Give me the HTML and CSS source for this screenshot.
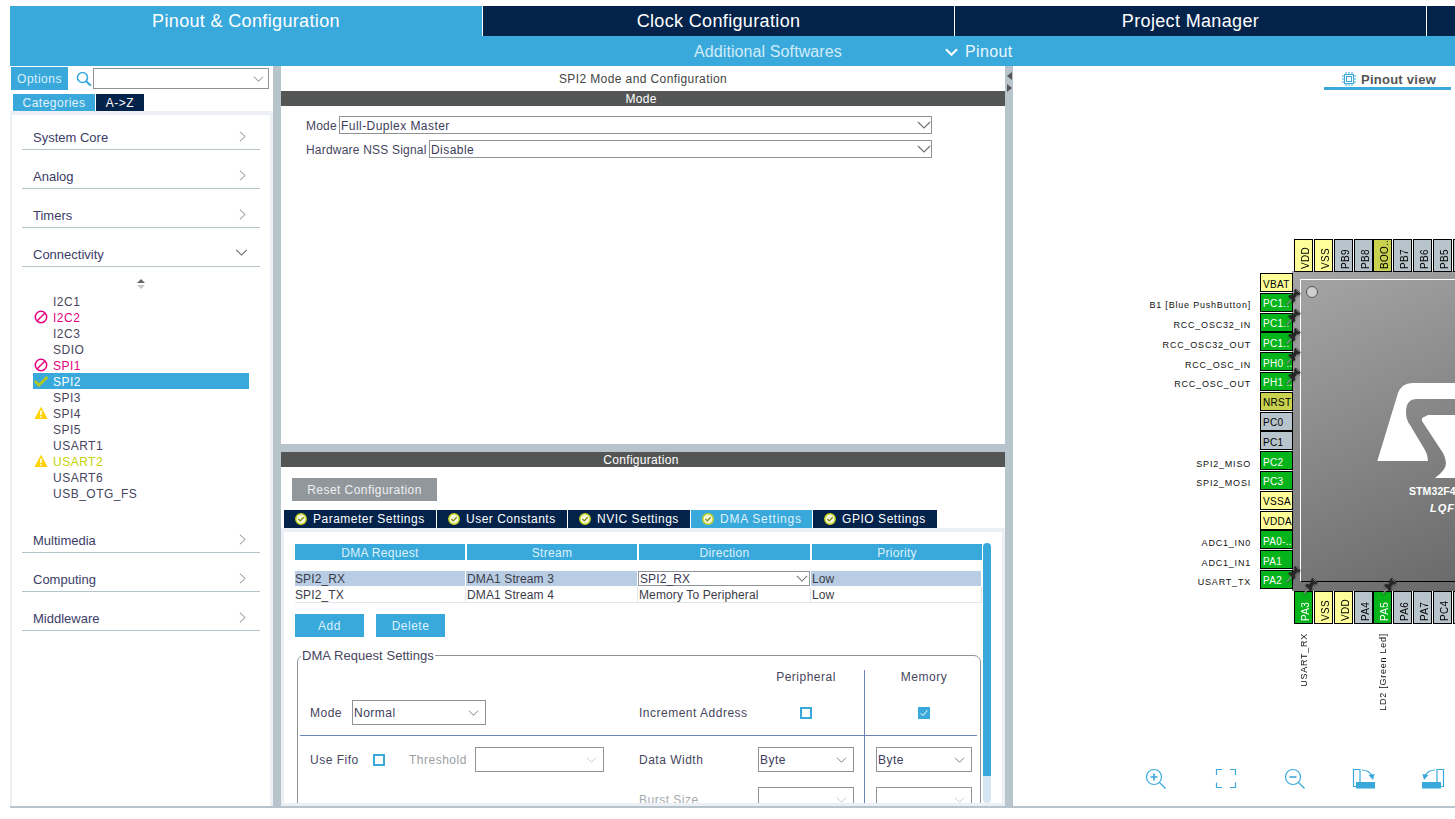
FILE: index.html
```html
<!DOCTYPE html>
<html lang="en">
<head>
<meta charset="utf-8">
<title>SPI2 Mode and Configuration</title>
<link rel="stylesheet" href="styles.css">
</head>
<body>
<svg class="defs" width="0" height="0" aria-hidden="true">
  <symbol id="chev" viewBox="0 0 14 8"><path d="M1 1 L7 7 L13 1" fill="none" stroke="currentColor" stroke-width="1.2"/></symbol>
  <symbol id="chevb" viewBox="0 0 14 8"><path d="M1 1 L7 7 L13 1" fill="none" stroke="currentColor" stroke-width="2.2"/></symbol>
  <symbol id="right" viewBox="0 0 8 12"><path d="M1 .5 L7 6 L1 11.5" fill="none" stroke="currentColor" stroke-width="1"/></symbol>
  <symbol id="tack" viewBox="0 0 16 18">
    <path d="M1 17.5 L6.5 11.5" stroke="#8c8c8c" stroke-width="1.4" fill="none"/>
    <path d="M2.2 8.4 L4.4 7.4 L6.6 8 L9.2 4.6 L8.6 2.6 L10.4 .8 L15.6 5.6 L13.8 7.6 L11.8 7 L9.2 10.8 L10 13 L8.4 15 Z" fill="#262626"/>
    <path d="M10.6 2 L14 5.2" stroke="#8a8a8a" stroke-width=".9" fill="none"/>
  </symbol>
  <symbol id="tabok" viewBox="0 0 12 12">
    <circle cx="6" cy="6" r="5.2" fill="#f4f6dc" stroke="#c5d21c" stroke-width="1.5"/>
    <path d="M3.4 6 L5.3 7.9 L8.7 4.2" fill="none" stroke="#7f8c10" stroke-width="1.3"/>
  </symbol>
  <symbol id="no" viewBox="0 0 14 14">
    <circle cx="7" cy="7" r="5.7" fill="none" stroke="#e4007f" stroke-width="1.5"/>
    <path d="M3.2 10.8 L10.8 3.2" stroke="#e4007f" stroke-width="1.5"/>
  </symbol>
  <symbol id="warn" viewBox="0 0 14 14">
    <path d="M7 .8 L13.6 13 H.4 Z" fill="#ffd400"/>
    <path d="M7 4.5 V9 M7 10.2 V11.8" stroke="#fff" stroke-width="1.6"/>
  </symbol>
</svg>

<div class="app">
  <nav class="tabs">
    <div class="tab tab-on">Pinout &amp; Configuration</div>
    <div class="tab">Clock Configuration</div>
    <div class="tab">Project Manager</div>
    <div class="tab tab-end"></div>
  </nav>
  <div class="subnav">
    <span class="sub-soft">Additional Softwares</span>
    <span class="sub-pin"><svg class="sub-chev"><use href="#chevb"/></svg>Pinout</span>
  </div>

  <main class="main">
    <aside class="side">
      <div class="opt-row">
        <button class="opt">Options</button>
        <svg class="search" viewBox="0 0 16 16"><circle cx="6.5" cy="6.5" r="5" fill="none" stroke="#39a9dc" stroke-width="1.6"/><path d="M10.2 10.2 L14.8 14.8" stroke="#39a9dc" stroke-width="2"/></svg>
        <div class="sel sel-search"><span></span><svg class="chev"><use href="#chev"/></svg></div>
      </div>
      <div class="cat-row">
        <div class="cat cat-on">Categories</div>
        <div class="cat cat-az">A-&gt;Z</div>
      </div>
      <div class="side-back">
        <div class="side-in">
          <div class="acc"><span>System Core</span><svg class="acc-r"><use href="#right"/></svg></div>
          <div class="acc"><span>Analog</span><svg class="acc-r"><use href="#right"/></svg></div>
          <div class="acc"><span>Timers</span><svg class="acc-r"><use href="#right"/></svg></div>
          <div class="acc"><span>Connectivity</span><svg class="acc-d"><use href="#chev"/></svg></div>
          <div class="ip-list">
            <div class="sort"><i class="sort-up"></i><i class="sort-dn"></i></div>
            <div class="ip"><span class="ip-ic"></span><span class="ip-t">I2C1</span></div>
            <div class="ip ip-no"><span class="ip-ic"><svg class="ic14"><use href="#no"/></svg></span><span class="ip-t">I2C2</span></div>
            <div class="ip"><span class="ip-ic"></span><span class="ip-t">I2C3</span></div>
            <div class="ip"><span class="ip-ic"></span><span class="ip-t">SDIO</span></div>
            <div class="ip ip-no"><span class="ip-ic"><svg class="ic14"><use href="#no"/></svg></span><span class="ip-t">SPI1</span></div>
            <div class="ip ip-sel"><span class="ip-ic"><svg class="ic14" viewBox="0 0 14 14"><path d="M.8 7 L5 11.2 L13.4 3" fill="none" stroke="#b5c91b" stroke-width="2.6"/></svg></span><span class="ip-t">SPI2</span></div>
            <div class="ip"><span class="ip-ic"></span><span class="ip-t">SPI3</span></div>
            <div class="ip"><span class="ip-ic"><svg class="ic14"><use href="#warn"/></svg></span><span class="ip-t">SPI4</span></div>
            <div class="ip"><span class="ip-ic"></span><span class="ip-t">SPI5</span></div>
            <div class="ip"><span class="ip-ic"></span><span class="ip-t">USART1</span></div>
            <div class="ip ip-warn"><span class="ip-ic"><svg class="ic14"><use href="#warn"/></svg></span><span class="ip-t">USART2</span></div>
            <div class="ip"><span class="ip-ic"></span><span class="ip-t">USART6</span></div>
            <div class="ip"><span class="ip-ic"></span><span class="ip-t">USB_OTG_FS</span></div>
          </div>
          <div class="acc"><span>Multimedia</span><svg class="acc-r"><use href="#right"/></svg></div>
          <div class="acc"><span>Computing</span><svg class="acc-r"><use href="#right"/></svg></div>
          <div class="acc"><span>Middleware</span><svg class="acc-r"><use href="#right"/></svg></div>
        </div>
      </div>
    </aside>

    <div class="split"></div>

    <section class="center">
      <div class="mode-panel">
        <div class="panel-title">SPI2 Mode and Configuration</div>
        <div class="bar">Mode</div>
        <div class="mode-form">
          <div class="mode-row">
            <label class="mode-l1">Mode</label>
            <div class="sel sel-mode"><span>Full-Duplex Master</span><svg class="chev"><use href="#chev"/></svg></div>
          </div>
          <div class="mode-row">
            <label class="mode-l2">Hardware NSS Signal</label>
            <div class="sel sel-mode"><span>Disable</span><svg class="chev"><use href="#chev"/></svg></div>
          </div>
        </div>
      </div>
      <div class="hsplit"></div>
      <div class="config">
        <div class="bar">Configuration</div>
        <button class="reset">Reset Configuration</button>
        <div class="ctabs">
          <div class="ctab ct1"><svg class="ic12"><use href="#tabok"/></svg>Parameter Settings</div>
          <div class="ctab ct2"><svg class="ic12"><use href="#tabok"/></svg>User Constants</div>
          <div class="ctab ct3"><svg class="ic12"><use href="#tabok"/></svg>NVIC Settings</div>
          <div class="ctab ct4 ctab-on"><svg class="ic12"><use href="#tabok"/></svg>DMA Settings</div>
          <div class="ctab ct5"><svg class="ic12"><use href="#tabok"/></svg>GPIO Settings</div>
        </div>
        <div class="cback">
          <div class="cin">
            <div class="sbar"></div>
            <div class="dma-head">
              <div>DMA Request</div><div>Stream</div><div>Direction</div><div>Priority</div>
            </div>
            <div class="dma-row dma-sel">
              <div>SPI2_RX</div><div>DMA1 Stream 3</div>
              <div class="dma-dirc"><div class="sel sel-cell"><span>SPI2_RX</span><svg class="chev"><use href="#chev"/></svg></div></div>
              <div>Low</div>
            </div>
            <div class="dma-row">
              <div>SPI2_TX</div><div>DMA1 Stream 4</div><div>Memory To Peripheral</div><div>Low</div>
            </div>
            <div class="btns">
              <button class="btn">Add</button>
              <button class="btn">Delete</button>
            </div>
            <fieldset class="req">
              <legend>DMA Request Settings</legend>
              <div class="req-grid">
                <div class="cell c-left"></div>
                <div class="cell c-mid c-head"><span class="ctl-w">Peripheral</span></div>
                <div class="cell c-right c-head"><span class="ctl-w">Memory</span></div>

                <div class="cell c-left rule">
                  <label class="lb-mode">Mode</label>
                  <div class="sel sel-md"><span>Normal</span><svg class="chev"><use href="#chev"/></svg></div>
                </div>
                <div class="cell c-mid rule">
                  <label class="lb-right">Increment Address</label>
                  <div class="ctl-w box-c"><i class="cb"></i></div>
                </div>
                <div class="cell c-right rule">
                  <div class="ctl-w box-c"><i class="cb cb-on"><svg viewBox="0 0 12 12"><path d="M2.6 6.2 L5 8.6 L9.4 3.4" fill="none" stroke="#fff" stroke-width="1"/></svg></i></div>
                </div>

                <div class="cell c-left r2">
                  <label class="lb-fifo">Use Fifo</label>
                  <i class="cb"></i>
                  <label class="lb-thr">Threshold</label>
                  <div class="sel sel-thr off"><span></span><svg class="chev"><use href="#chev"/></svg></div>
                </div>
                <div class="cell c-mid r2">
                  <label class="lb-right">Data Width</label>
                  <div class="sel ctl-w sel-sm"><span>Byte</span><svg class="chev"><use href="#chev"/></svg></div>
                </div>
                <div class="cell c-right r2">
                  <div class="sel ctl-w sel-sm"><span>Byte</span><svg class="chev"><use href="#chev"/></svg></div>
                </div>

                <div class="cell c-left r3"></div>
                <div class="cell c-mid r3">
                  <label class="lb-right lb-off">Burst Size</label>
                  <div class="sel ctl-w sel-sm off"><span></span><svg class="chev"><use href="#chev"/></svg></div>
                </div>
                <div class="cell c-right r3">
                  <div class="sel ctl-w sel-sm off"><span></span><svg class="chev"><use href="#chev"/></svg></div>
                </div>
              </div>
            </fieldset>
          </div>
        </div>
      </div>
    </section>

    <div class="split split-v"><i class="arr-l"></i><i class="arr-r"></i></div>

    <section class="pinout">
      <header class="pv-head">
        <div class="pv-tab">
          <svg class="pv-ic" viewBox="0 0 14 14" fill="none" stroke="#39a9dc"><rect x="2.5" y="2.5" width="9" height="9"/><rect x="4.5" y="4.5" width="5" height="5"/><path d="M4 0V2M7 0V2M10 0V2M4 12V14M7 12V14M10 12V14M0 4H2M0 7H2M0 10H2M12 4H14M12 7H14M12 10H14"/></svg>
          Pinout view
        </div>
      </header>
      <div class="canvas">
        <div class="chip">
          <div class="chip-line"></div>
          <i class="dot"></i>
          <svg class="logo" viewBox="1352 371 110 120">
            <path fill="#fff" d="M1377.3 461 L1398 393 Q1402 383 1412 383 H1462 V399 H1417 Q1406 399 1406 412 Q1406 420 1410 425 L1425 450 Q1428 455 1428 461 Z"/>
            <path fill="#fff" d="M1422 418 L1428 415 H1462 V478 H1435 Q1446 470 1446 463 Q1445 455 1441 450 L1422 421 Z"/>
          </svg>
          <div class="chip-name">STM32F446RETx</div>
          <div class="chip-pkg">LQFP64</div>
        </div>

        <div class="pins-left">
          <div class="pr"><b class="pin y">VBAT</b></div>
          <div class="pr"><span>B1 [Blue PushButton]</span><b class="pin g">PC1..<svg class="tack"><use href="#tack"/></svg></b></div>
          <div class="pr"><span>RCC_OSC32_IN</span><b class="pin g">PC1..<svg class="tack"><use href="#tack"/></svg></b></div>
          <div class="pr"><span>RCC_OSC32_OUT</span><b class="pin g">PC1..<svg class="tack"><use href="#tack"/></svg></b></div>
          <div class="pr"><span>RCC_OSC_IN</span><b class="pin g">PH0 ..<svg class="tack"><use href="#tack"/></svg></b></div>
          <div class="pr"><span>RCC_OSC_OUT</span><b class="pin g">PH1 ..<svg class="tack"><use href="#tack"/></svg></b></div>
          <div class="pr"><b class="pin o">NRST</b></div>
          <div class="pr"><b class="pin s">PC0</b></div>
          <div class="pr"><b class="pin s">PC1</b></div>
          <div class="pr"><span>SPI2_MISO</span><b class="pin g">PC2</b></div>
          <div class="pr"><span>SPI2_MOSI</span><b class="pin g">PC3</b></div>
          <div class="pr"><b class="pin y">VSSA</b></div>
          <div class="pr"><b class="pin y">VDDA</b></div>
          <div class="pr"><span>ADC1_IN0</span><b class="pin g">PA0-..</b></div>
          <div class="pr"><span>ADC1_IN1</span><b class="pin g">PA1</b></div>
          <div class="pr"><span>USART_TX</span><b class="pin g">PA2<svg class="tack"><use href="#tack"/></svg></b></div>
        </div>

        <div class="pins-h pins-top">
          <div class="pc"><b class="pin v y">VDD</b></div>
          <div class="pc"><b class="pin v y">VSS</b></div>
          <div class="pc"><b class="pin v s">PB9</b></div>
          <div class="pc"><b class="pin v s">PB8</b></div>
          <div class="pc"><b class="pin v o">BOO..</b></div>
          <div class="pc"><b class="pin v s">PB7</b></div>
          <div class="pc"><b class="pin v s">PB6</b></div>
          <div class="pc"><b class="pin v s">PB5</b></div>
          <div class="pc"><b class="pin v s">PB4</b></div>
        </div>

        <div class="pins-h pins-bot">
          <div class="pc"><b class="pin v g">PA3</b><svg class="tack tack-b"><use href="#tack"/></svg><span class="vl">USART_RX</span></div>
          <div class="pc"><b class="pin v y">VSS</b></div>
          <div class="pc"><b class="pin v y">VDD</b></div>
          <div class="pc"><b class="pin v s">PA4</b></div>
          <div class="pc"><b class="pin v g">PA5</b><svg class="tack tack-b"><use href="#tack"/></svg><span class="vl">LD2 [Green Led]</span></div>
          <div class="pc"><b class="pin v s">PA6</b></div>
          <div class="pc"><b class="pin v s">PA7</b></div>
          <div class="pc"><b class="pin v s">PC4</b></div>
          <div class="pc"><b class="pin v s">PC5</b></div>
        </div>
      </div>
      <footer class="tools">
        <svg class="tool" viewBox="0 0 24 24"><circle cx="9" cy="10" r="7.5"/><path d="M9 6.5V13.5M5.5 10H12.5" stroke-width="1.6"/><path d="M14.5 15.5 L20.5 21.5"/></svg>
        <svg class="tool" viewBox="0 0 24 24"><path d="M2.5 8V2.5H8M16 2.5H21.5V8M21.5 15.5V20.5H16M8 20.5H2.5V15.5"/></svg>
        <svg class="tool" viewBox="0 0 24 24"><circle cx="10" cy="10" r="7.5"/><path d="M6.5 10H13.5" stroke-width="1.6"/><path d="M15.5 15.5 L21.5 21.5"/></svg>
        <svg class="tool" viewBox="0 0 24 24"><path d="M8 15V2.5H1.5V19.5H4"/><path d="M10 3 Q17 3 20 9"/><path class="tf" d="M16.5 8 L22.5 7 L21 13 Z"/><rect class="tf" x="4" y="15" width="19" height="6.5"/></svg>
        <svg class="tool" viewBox="0 0 24 24"><path d="M16 15V2.5H22.5V19.5H20"/><path d="M14 3 Q7 3 4 9"/><path class="tf" d="M7.5 8 L1.5 7 L3 13 Z"/><rect class="tf" x="1" y="15" width="19" height="6.5"/></svg>
      </footer>
    </section>
  </main>
</div>
</body>
</html>
```

FILE: styles.css
```css
* { box-sizing: border-box; }
html, body { margin: 0; height: 100%; background: #fff; overflow: hidden; }
body {
  font-family: "Liberation Sans", Arial, sans-serif;
  font-size: 12px;
  letter-spacing: .5px;
  color: #46465e;
}
.defs { position: absolute; }
button { font: inherit; letter-spacing: inherit; border: 0; padding: 0; }
label { display: block; }
i { display: block; }

.app { margin: 6px 0 0 10px; width: 1445px; height: 802px; display: flex; flex-direction: column; border-bottom: 2px solid #b8c4cc; }

/* top navigation */
.tabs { display: flex; height: 30px; gap: 1px; background: #fff; }
.tab { width: 471px; background: #03234b; color: #fff; font-size: 18px; letter-spacing: .35px; display: flex; align-items: center; justify-content: center; padding-top: 1px; }
.tab-on { width: 472px; background: #39a9dc; }
.tab-end { width: 28px; }
.subnav { height: 30px; background: #39a9dc; display: flex; align-items: center; padding: 1px 0 0 684px; font-size: 16px; letter-spacing: .1px; }
.sub-soft { color: #d2ecf8; width: 251px; }
.sub-pin { color: #eaf6fc; display: flex; align-items: center; gap: 7px; letter-spacing: .35px; }
.sub-chev { width: 13px; height: 8px; color: #fff; }

/* layout */
.main { flex: 1; min-height: 0; display: grid; grid-template-columns: 263px 8px 724px 8px 442px; }
.split { background: #b8c4cc; }
.split-v { padding-top: 4px; }
.arr-l, .arr-r { width: 0; height: 0; border-style: solid; border-color: transparent; margin: 2px 0 4px 2px; }
.arr-l { border-width: 4px 5px 4px 0; border-right-color: #555; }
.arr-r { border-width: 4px 0 4px 5px; border-left-color: #555; }

/* sidebar */
.side { display: flex; flex-direction: column; min-height: 0; }
.opt-row { height: 28px; display: flex; padding: 1px 0 0 1px; }
.opt { width: 57px; height: 23px; background: #39a9dc; color: #d9f0fb; }
.search { width: 16px; height: 16px; margin: 4px 0 0 8px; }
.sel { display: flex; align-items: center; justify-content: space-between; background: #fff; border: 1px solid #8f9398; color: #3c3c5a; padding: 0 6px 0 1px; }
.sel-search { width: 176px; height: 21px; margin: 1px 0 0 1px; padding-right: 4px; }
.chev { width: 11px; height: 6px; color: #6e7276; flex: none; }
.off .chev { color: #c0c4c8; }
.cat-row { display: flex; height: 17px; padding-left: 3px; gap: 1px; }
.cat { display: flex; align-items: center; justify-content: center; color: #e2f3fb; }
.cat-on { width: 82px; background: #39a9dc; }
.cat-az { width: 48px; background: #03234b; color: #fff; }
.side-back { flex: 1; background: #eceff3; padding: 4px 3px 0 2px; min-height: 0; }
.side-in { background: #fff; height: 100%; padding: 0 10px; }
.acc { height: 39px; border-bottom: 1px solid #b8c4cc; display: flex; align-items: flex-end; justify-content: space-between; padding: 0 14px 4px 11px; font-size: 13px; letter-spacing: 0; color: #3c3c68; }
.acc:first-child { height: 35px; }
.acc-r { width: 7px; height: 11px; color: #777; margin-bottom: 3px; }
.acc-d { width: 13px; height: 7px; color: #666; margin: 0 -2px 6px 0; }
.ip-list { height: 247px; padding: 12px 0 0 11px; }
.sort { height: 14px; width: 216px; display: flex; flex-direction: column; align-items: center; gap: 2px; }
.sort-up, .sort-dn { width: 0; height: 0; border-style: solid; border-color: transparent; }
.sort-up { border-width: 0 4px 4px; border-bottom-color: #666; }
.sort-dn { border-width: 4px 4px 0; border-top-color: #c4c8cc; }
.ip { width: 216px; height: 16px; display: flex; align-items: center; }
.ip-t { padding-top: 1px; }
.ip-ic { width: 20px; height: 16px; flex: none; display: flex; align-items: center; padding-left: 1px; }
.ic14 { width: 14px; height: 14px; }
.ip-no { color: #e4007f; }
.ip-warn { color: #c3d200; }
.ip-sel { background: #39a9dc; color: #fff; }

/* centre */
.center { display: flex; flex-direction: column; min-height: 0; }
.mode-panel { height: 378px; }
.panel-title { height: 25px; display: flex; align-items: center; justify-content: center; color: #444; letter-spacing: .4px; }
.bar { height: 15px; background: #545656; color: #fff; display: flex; align-items: center; justify-content: center; letter-spacing: .3px; padding-right: 4px; }
.mode-form { padding: 10px 0 0 25px; display: flex; flex-direction: column; gap: 6px; letter-spacing: .2px; }
.mode-row { display: flex; align-items: center; }
.mode-row label, .mode-row span { padding-top: 1px; }
.mode-l1 { width: 33px; }
.mode-l2 { width: 123px; }
.sel-mode { flex: 1; height: 18px; margin-right: 73px; padding-right: 0; letter-spacing: .45px; }
.sel-mode .chev { width: 14px; height: 8px; }
.hsplit { height: 8px; background: #b8c4cc; }
.config { flex: 1; min-height: 0; display: flex; flex-direction: column; }
.reset { align-self: flex-start; width: 145px; height: 23px; margin: 11px 0 9px 11px; background: #92979c; color: #eef0f2; flex: none; letter-spacing: .45px; }
.ctabs { display: flex; gap: 1px; height: 18px; padding-left: 3px; flex: none; }
.ctab { background: #03234b; color: #fff; display: flex; align-items: center; padding-left: 11px; gap: 6px; }
.ct1 { width: 152px; } .ct2 { width: 130px; } .ct3 { width: 122px; } .ct4 { width: 121px; } .ct5 { width: 124px; letter-spacing: .55px; }
.ctab-on { background: #39a9dc; color: #def1fa; letter-spacing: .75px; }
.ic12 { width: 12px; height: 12px; flex: none; }
.cback { flex: 1; min-height: 0; background: #eceff3; padding: 4px 3px 3px; }
.cin { position: relative; background: #fff; height: 100%; overflow: hidden; padding: 12px 0 0 11px; }
.sbar { position: absolute; left: 699px; top: 11px; width: 8px; height: 260px; border-radius: 4px; background: linear-gradient(#39a9dc 233px, #d7e6f3 233px); }
.dma-head { display: grid; grid-template-columns: 170px 170px 171px 170px; gap: 2px; height: 16px; width: 687px; }
.dma-head div { background: #39a9dc; color: #def1fa; display: flex; align-items: center; justify-content: center; letter-spacing: .3px; padding-top: 1px; }
.dma-row { display: grid; grid-template-columns: 171px 172px 173px 171px; height: 16px; width: 687px; border-bottom: 1px solid #e2e6ea; color: #3c3c48; }
.dma-row > div { padding: 0 1px; border-right: 1px solid #e2e6ea; display: flex; align-items: center; overflow: hidden; letter-spacing: .12px; }
.dma-row > div:first-child { padding-left: 0; }
.dma-head + .dma-row { margin-top: 11px; }
.dma-sel { background: #b8cde3; border-bottom: 1px solid #fff; }
.dma-sel > div { border-right-color: #fff; }
.dma-row > .dma-dirc { padding: 0; }
.sel-cell { width: 100%; height: 15px; padding-right: 0; }
.sel-cell .chev { width: 12px; height: 7px; margin-right: 1px; }
.btns { display: flex; gap: 12px; margin-top: 11px; }
.btn { width: 69px; height: 23px; background: #39a9dc; color: #def1fa; }

/* fieldset */
.req { margin: 11px 0 0 2px; width: 684px; height: 250px; padding: 7px 0 0 0; border: 1px solid #8f9398; border-radius: 7px; min-width: 0; }
.req legend { margin-left: 3px; padding: 0 1px; font-size: 13px; letter-spacing: .05px; line-height: 15px; }
.req-grid { display: grid; grid-template-columns: 341px 226px 115px; grid-template-rows: 20px 46px 47px 40px; }
.cell { display: flex; align-items: center; }
.c-mid { border-right: 1px solid #6a84ba; }
.c-head { align-items: flex-start; }
.c-mid.c-head { padding-left: 119px; }
.c-right { padding-left: 11px; }
.ctl-w { width: 96px; text-align: center; }
.rule { border-bottom: 1px solid #6a84ba; }
.c-left.rule { margin-left: 2px; padding-left: 10px; }
.c-right.rule { margin-right: 3px; }
.c-left.r2 { padding-left: 12px; }
.lb-mode { width: 42px; }
.lb-fifo { width: 63px; }
.lb-thr { width: 66px; margin-left: 24px; color: #9a9ea6; }
.lb-right { width: 119px; }
.lb-off { color: #a6aab0; }
.box-c { display: flex; justify-content: center; }
.cb { width: 12px; height: 12px; border: 2px solid #39a9dc; flex: none; }
.cb-on { background: #39a9dc; border: 0; }
.cb-on svg { display: block; width: 12px; height: 12px; }
.sel-md { width: 134px; height: 25px; }
.sel-thr { width: 129px; height: 25px; }
.sel-sm { height: 25px; text-align: left; }
.r3 { align-items: flex-start; padding-top: 4px; }
.c-mid.r3 .lb-right { padding-top: 6px; }

/* pinout */
.pinout { display: flex; flex-direction: column; min-height: 0; min-width: 0; }
.pv-head { height: 25px; display: flex; justify-content: flex-end; padding-right: 4px; flex: none; }
.pv-tab { width: 127px; height: 24px; border-bottom: 3px solid #39a9dc; display: flex; align-items: center; justify-content: flex-end; gap: 5px; padding: 5px 15px 0 0; font-size: 13px; font-weight: bold; color: #555; letter-spacing: .25px; }
.pv-ic { width: 14px; height: 14px; }
.canvas { position: relative; flex: 1; min-height: 0; overflow: hidden; }
.chip { position: absolute; left: 279px; top: 180px; width: 320px; height: 320px; background: linear-gradient(155deg, #a6a6a6, #5e5e5e); overflow: hidden; }
.chip-line { position: absolute; left: 8px; top: 8px; width: 330px; height: 303px; border-left: 1px solid #fff; border-top: 1px solid #fff; border-bottom: 1px solid #000; }
.dot { position: absolute; left: 14px; top: 15px; width: 12px; height: 12px; border-radius: 50%; background: #cfcfcf; border: 1px solid #555; }
.logo { position: absolute; left: 60px; top: 100px; width: 110px; height: 120px; }
.chip-name { position: absolute; left: 117px; top: 214px; font-size: 10.5px; font-weight: bold; color: #fff; white-space: nowrap; letter-spacing: .1px; }
.chip-pkg { position: absolute; left: 138px; top: 231px; font-size: 11px; font-weight: bold; font-style: italic; color: #fff; white-space: nowrap; letter-spacing: 1px; }

.pin { position: relative; display: flex; align-items: center; flex: none; border: 1px solid #000; font-weight: normal; color: #000; font-size: 10px; letter-spacing: .3px; white-space: nowrap; }
.y { background: #ffff99; }
.g { background: #05b31a; color: #fff; }
.s { background: #b8c4cc; }
.o { background: #c8d24f; }

.pins-left { position: absolute; left: 100px; top: 182px; width: 180px; display: flex; flex-direction: column; gap: .8px; }
.pr { display: flex; justify-content: flex-end; align-items: center; height: 19px; gap: 9px; font-size: 9px; letter-spacing: .8px; color: #111; white-space: nowrap; }
.pr > span { padding-top: 6px; }
.pr .pin { width: 33px; height: 19px; padding: 3px 0 0 2px; }

.pins-h { position: absolute; left: 281px; display: flex; gap: .85px; }
.pins-top { top: 148px; }
.pins-bot { top: 500px; }
.pc { position: relative; width: 19px; flex: none; display: flex; flex-direction: column; align-items: center; }
.pin.v { width: 19px; height: 33px; writing-mode: vertical-rl; transform: rotate(180deg); justify-content: flex-start; align-items: center; padding: 2px 4px 0 0; }
.vl { writing-mode: vertical-rl; transform: rotate(180deg); font-size: 9px; letter-spacing: .75px; color: #111; white-space: nowrap; margin: 9px 0 0 1px; }

.tack { position: absolute; right: -9px; top: -6px; width: 15px; height: 17px; z-index: 2; filter: drop-shadow(0 1px 1px rgba(0,0,0,.4)); }
.tack-b { right: auto; left: 9px; top: -14px; }

.tools { flex: none; display: flex; gap: 45px; padding: 0 0 15px 132px; }
.tool { width: 24px; height: 24px; fill: none; stroke: #39a9dc; stroke-width: 1.2; }
.tool .tf { fill: #39a9dc; stroke: none; }
```
